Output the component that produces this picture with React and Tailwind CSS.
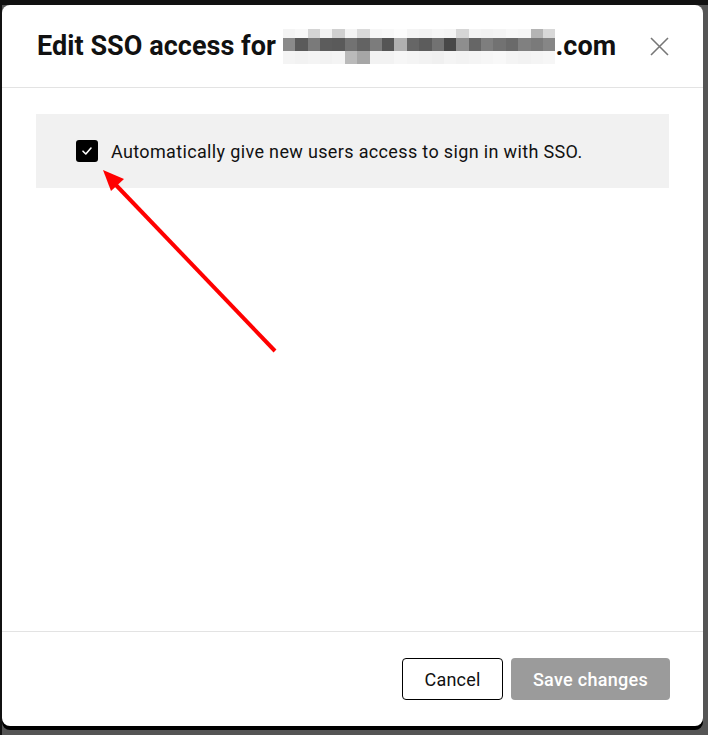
import React from "react";

export default function App() {
  const top = ["#f4f4f4","#f8f8f8","#d4d4d4","#f2f2f2","#d0d0d0","#f4f4f4","#dadada","#f6f6f6","#f8f8f8","#fcfcfc","#f4f4f4","#f2f2f2","#f6f6f6","#f4f4f4","#d6d6d6","#f4f4f4","#f2f2f2","#f4f4f4","#f8f8f8","#f6f6f6","#b4b4b4","#d8d8d8"];
  const mid = ["#8a8a8a","#5a5a5a","#7a7a7a","#5c5c5c","#5a5a5a","#727272","#636363","#7c7c7c","#555555","#b0b0b0","#666666","#5c5c5c","#727272","#484848","#8e8e8e","#666666","#7e7e7e","#727272","#6a6a6a","#808080","#7a7a7a","#868686"];
  const bot = ["#f4f4f4","#f2f2f2","#f4f4f4","#f2f2f2","#f4f4f4","#bababa","#a6a6a6","#f2f2f2","#f2f2f2","#f6f6f6","#f4f4f4","#f2f2f2","#f0f0f0","#f4f4f4","#f2f2f2","#f4f4f4","#f6f6f6","#f8f8f8","#f4f4f4","#f2f2f2","#f4f4f4","#f6f6f6"];
  return (
    <div
      className="relative w-[708px] h-[735px] bg-[#555] border-t-[5px] border-l-[2px] border-[#111] flex items-start overflow-hidden"
      style={{ fontFamily: "Roboto, 'Liberation Sans', sans-serif" }}
    >
      <div className="w-[701px] h-[721px] bg-white rounded-lg shadow-[0_4px_0_#000] flex flex-col">
        {/* Header */}
        <div className="h-[83px] flex items-center justify-between pl-[35px] pr-[34px] border-b border-[#e3e3e3] shrink-0">
          <div className="flex items-center text-[27px] font-bold text-[#111] tracking-[0.05px]">
            <span>Edit SSO access for&nbsp;</span>
            <span className="flex flex-col">
              <span className="flex h-[9px]">
                {top.map((c, i) => (
                  <span key={i} className="w-[12.4px] h-full" style={{ background: c }} />
                ))}
              </span>
              <span className="flex h-[13px]">
                {mid.map((c, i) => (
                  <span key={i} className="w-[12.4px] h-full" style={{ background: c }} />
                ))}
              </span>
              <span className="flex h-[13px]">
                {bot.map((c, i) => (
                  <span key={i} className="w-[12.4px] h-full" style={{ background: c }} />
                ))}
              </span>
            </span>
            <span>.com</span>
          </div>
          <button className="w-[20px] h-[20px] flex items-center justify-center text-[#777]">
            <svg width="19" height="19" viewBox="0 0 19 19" fill="none" stroke="#777" strokeWidth="1.6">
              <path d="M1 1 L18 18 M18 1 L1 18" />
            </svg>
          </button>
        </div>

        {/* Body */}
        <div className="flex-1 px-[34px] pt-[26px]">
          <div className="h-[74px] bg-[#f1f1f1] flex items-center pl-[40px] gap-[13px]">
            <span className="w-[22px] h-[22px] bg-black rounded-[3px] flex items-center justify-center shrink-0">
              <svg width="12" height="10" viewBox="0 0 12 10" fill="none" stroke="white" strokeWidth="1.6" strokeLinecap="round" strokeLinejoin="round">
                <path d="M2 5.2 L4.8 8 L10 2" />
              </svg>
            </span>
            <span className="text-[18px] text-[#111] tracking-[0.35px]">
              Automatically give new users access to sign in with SSO.
            </span>
          </div>
        </div>

        {/* Footer */}
        <div className="h-[95px] border-t border-[#e3e3e3] flex items-center justify-end gap-[8px] pr-[33px] shrink-0">
          <button className="w-[101px] h-[42px] border border-black rounded-[4px] bg-white text-[18px] text-[#111] tracking-[0.2px]">
            Cancel
          </button>
          <button className="w-[159px] h-[42px] rounded-[4px] bg-[#9b9b9b] text-[18px] font-medium text-white tracking-[0.3px]">
            Save changes
          </button>
        </div>
      </div>

      {/* Annotation arrow */}
      <svg className="absolute left-0 top-0 pointer-events-none" width="708" height="735" viewBox="0 0 708 735" style={{ marginTop: -5, marginLeft: -2 }}>
        <line x1="275" y1="351" x2="114" y2="183" stroke="#f00" strokeWidth="4" />
        <polygon points="103,170 124,179 111,191" fill="#f00" />
      </svg>
    </div>
  );
}
